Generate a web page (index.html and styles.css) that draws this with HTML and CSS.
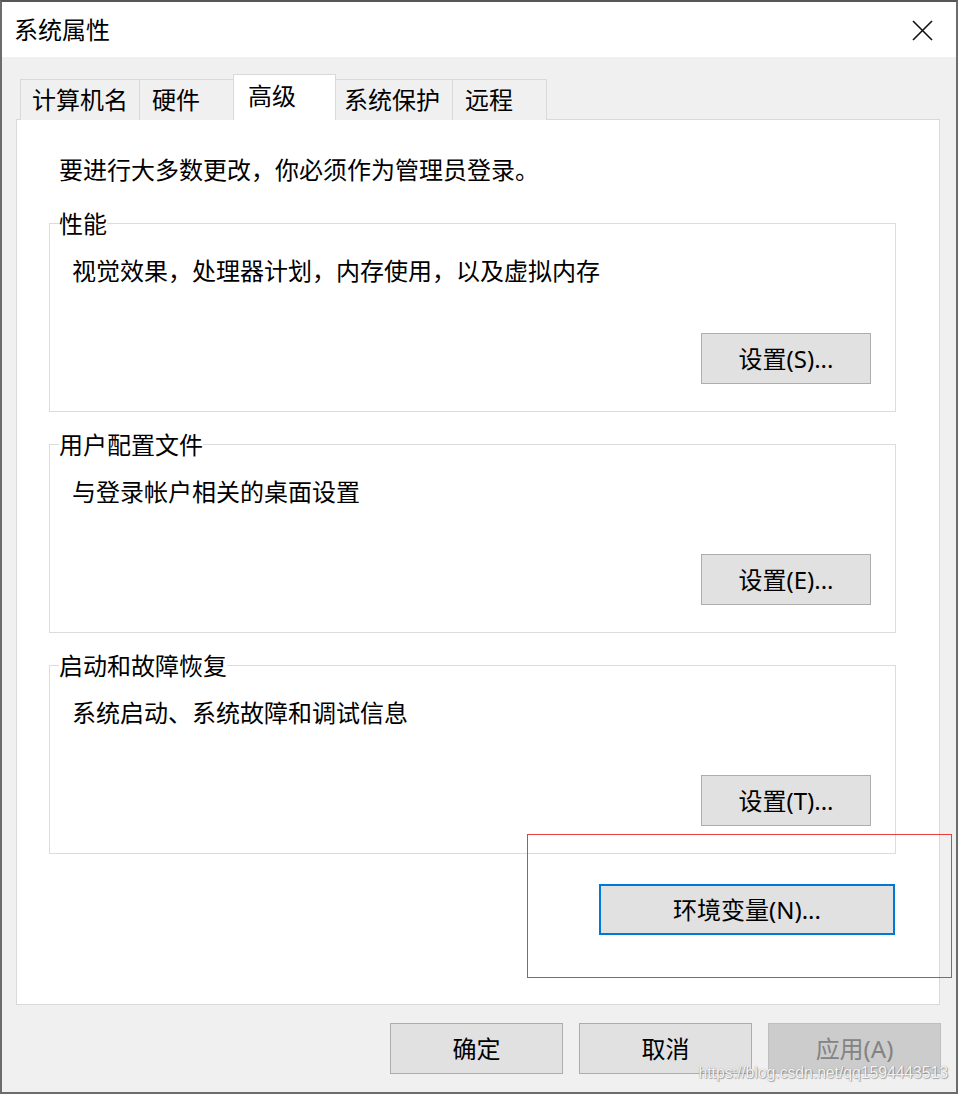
FILE: index.html
```html
<!DOCTYPE html>
<html lang="zh-CN">
<head>
<meta charset="utf-8">
<title>系统属性</title>
<link rel="stylesheet" href="styles.css">
</head>
<body>
<div class="window">
  <div class="titlebar">
    <span class="title">系统属性</span>
    <svg class="close" width="21" height="21" viewBox="0 0 21 21" aria-hidden="true">
      <path d="M1 1 L20 20 M20 1 L1 20" stroke="#111" stroke-width="1.6" fill="none"/>
    </svg>
  </div>
  <div class="client">
    <div class="tabs">
      <div class="tab w1">计算机名</div>
      <div class="tab w2">硬件</div>
      <div class="tab active">高级</div>
      <div class="tab w4">系统保护</div>
      <div class="tab w5">远程</div>
    </div>
    <div class="panel">
      <p class="notice">要进行大多数更改，你必须作为管理员登录。</p>
      <fieldset class="group">
        <legend>性能</legend>
        <p class="desc">视觉效果，处理器计划，内存使用，以及虚拟内存</p>
        <div class="row"><button class="btn">设置(S)...</button></div>
      </fieldset>
      <fieldset class="group">
        <legend>用户配置文件</legend>
        <p class="desc">与登录帐户相关的桌面设置</p>
        <div class="row"><button class="btn">设置(E)...</button></div>
      </fieldset>
      <fieldset class="group">
        <legend>启动和故障恢复</legend>
        <p class="desc">系统启动、系统故障和调试信息</p>
        <div class="row"><button class="btn">设置(T)...</button></div>
      </fieldset>
      <div class="row env-row"><button class="btn env">环境变量(N)...</button></div>
    </div>
    <div class="footer">
      <button class="btn foot">确定</button>
      <button class="btn foot">取消</button>
      <button class="btn foot disabled">应用(A)</button>
    </div>
  </div>
  <div class="annotation"></div>
  <div class="watermark">https://blog.csdn.net/qq1594443513</div>
</div>
</body>
</html>
```

FILE: styles.css
```css
* { box-sizing: border-box; }

html, body {
  margin: 0;
  padding: 0;
  background: #f0f0f0;
}

body {
  font-family: "Noto Sans", "Noto Sans CJK SC", sans-serif;
  font-size: 24px;
  color: #000;
}

.window {
  position: relative;
  width: 958px;
  height: 1094px;
  border: 2px solid #6c6c6c;
  border-top-color: #565656;
  background: #f0f0f0;
  overflow: hidden;
}

.titlebar {
  height: 55px;
  background: #fff;
  display: flex;
  align-items: center;
  justify-content: space-between;
  padding: 0 23px 0 12px;
}

.title {
  line-height: 24px;
}

.close { display: block; margin-top: 1px; }

.client {
  padding-top: 17px;
}

.tabs {
  display: flex;
  align-items: flex-end;
  height: 46px;
  padding-left: 18px;
  margin-bottom: -1px;
  position: relative;
  z-index: 2;
}

.tab {
  height: 41px;
  line-height: 40px;
  border: 1px solid #d9d9d9;
  border-bottom: none;
  background: #f0f0f0;
  padding-left: 11px;
  margin-left: -1px;
  white-space: nowrap;
}

.tab:first-child { margin-left: 0; }

.w1 { width: 120px; }
.w2 { width: 95px; padding-left: 12px; }
.w4 { width: 118px; padding-left: 8px; }
.w5 { width: 95px; padding-left: 12px; }

.tab.active {
  width: 103px;
  height: 46px;
  line-height: 42px;
  background: #fff;
  padding-left: 14px;
  position: relative;
  z-index: 3;
}

.panel {
  margin-left: 14px;
  width: 924px;
  height: 886px;
  background: #fff;
  border: 1px solid #d9d9d9;
  padding: 38px 43px 0 32px;
  position: relative;
  z-index: 1;
}

.notice {
  margin: 0 0 29px 10px;
  line-height: 24px;
}

.group {
  margin: 0 0 20px 0;
  padding: 23px 24px 27px 9px;
  border: 1px solid #dcdcdc;
  min-width: 0;
}

.group legend {
  padding: 0;
  line-height: 25px;
  margin-left: 0;
}

.desc {
  margin: 0 0 50px 13px;
  line-height: 24px;
}

.row {
  display: flex;
  justify-content: flex-end;
}

.btn {
  font: inherit;
  font-size: 24px;
  color: #000;
  background: #e1e1e1;
  border: 1px solid #adadad;
  height: 51px;
  width: 170px;
  padding: 0;
  line-height: 24px;
  border-radius: 0;
}

.env-row {
  margin-top: 30px;
  padding-right: 1px;
}

.btn.env {
  width: 296px;
  border: 2px solid #0078d7;
}

.footer {
  display: flex;
  justify-content: flex-end;
  gap: 16px;
  margin-top: 18px;
  padding-right: 15px;
}

.btn.foot { width: 173px; }

.btn.disabled {
  background: #cccccc;
  border-color: #bfbfbf;
  color: #838383;
}

.annotation {
  position: absolute;
  left: 525px;
  top: 832px;
  width: 425px;
  height: 144px;
  border: 1px solid #ee3b3b;
  z-index: 5;
  pointer-events: none;
}

.watermark {
  position: absolute;
  right: 8px;
  top: 1061px;
  font-family: "Liberation Sans", Arial, sans-serif;
  font-size: 15.7px;
  line-height: 20px;
  color: rgba(255, 255, 255, 0.92);
  text-shadow: 0 0 1px #8a8a8a, 1px 1px 1px rgba(0, 0, 0, 0.3);
  z-index: 6;
  white-space: nowrap;
}
```
